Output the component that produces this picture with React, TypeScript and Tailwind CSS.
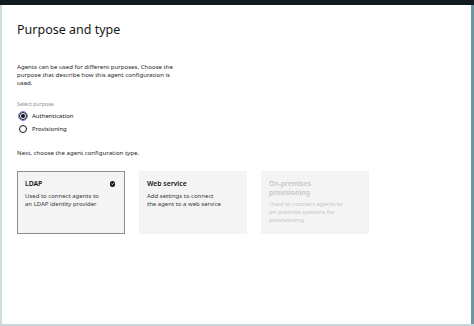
import React from 'react';

const cards = [
  {
    id: 'ldap',
    title: 'LDAP',
    text: 'Used to connect agents to an LDAP identity provider',
    selected: true,
    disabled: false
  },
  {
    id: 'web',
    title: 'Web service',
    text: 'Add settings to connect the agent to a web service',
    selected: false,
    disabled: false
  },
  {
    id: 'onprem',
    title: 'On-premises provisioning',
    text: 'Used to connect agents to on premise systems for provisioning',
    selected: false,
    disabled: true
  }
];

function Radio({ label, checked }: { label: string; checked?: boolean }) {
  return (
    <label className="flex items-center gap-[4px] text-[6px] text-[#161616]">
      {checked ? (
        <span className="flex h-[10px] w-[10px] items-center justify-center rounded-full border-[1.5px] border-[#6a7ff0]">
          <span className="flex h-[8px] w-[8px] items-center justify-center rounded-full border border-[#161616] bg-white">
            <span className="h-[4px] w-[4px] rounded-full bg-[#161616]" />
          </span>
        </span>
      ) : (
        <span className="flex h-[10px] w-[10px] items-center justify-center">
          <span className="h-[8px] w-[8px] rounded-full border border-[#161616] bg-white" />
        </span>
      )}
      <span>{label}</span>
    </label>
  );
}

export default function App() {
  return (
    <div
      className="flex h-[326px] w-[474px] flex-col overflow-hidden bg-white"
      style={{ fontFamily: '"Noto Sans", "Open Sans", sans-serif' }}
    >
      <div className="h-[5px] shrink-0 bg-[#121b1f]" />
      <div className="flex min-h-0 flex-1">
        <div className="w-[2px] shrink-0 bg-[#cddde3]" />
        <main className="flex-1 bg-white pl-[15px] pt-[17px]">
          <h1 className="text-[12.5px] leading-[16px] text-[#161616]">Purpose and type</h1>
          <p className="mt-[25px] w-[165px] text-[6.1px] leading-[8px] text-[#262626]">
            Agents can be used for different purposes. Choose the purpose that describe how this
            agent configuration is used.
          </p>
          <p className="mt-[14px] text-[5.3px] leading-[7px] text-[#8d8d8d]">Select purpose</p>
          <div className="mt-[3px] flex flex-col gap-[3px] pl-[1px]">
            <Radio label="Authentication" checked />
            <Radio label="Provisioning" />
          </div>
          <p className="mt-[15px] text-[6.1px] leading-[8px] text-[#262626]">
            Next, choose the agent configuration type.
          </p>
          <div className="mt-[14px] flex gap-[14px]">
            {cards.map((card) => (
              <div
                key={card.id}
                className={
                  card.selected
                    ? 'relative h-[63px] w-[108px] border border-[#8d8d8d] bg-[#f4f4f4] px-[7px] pt-[8px]'
                    : 'relative h-[63px] w-[108px] border border-transparent bg-[#f4f4f4] px-[7px] pt-[8px]'
                }
              >
                {card.selected ? (
                  <span className="absolute right-[9px] top-[9px] flex h-[5.5px] w-[5.5px] items-center justify-center rounded-full bg-[#161616]">
                    <svg viewBox="0 0 6 6" className="h-[5.5px] w-[5.5px]">
                      <path d="M1.6 3.1 L2.6 4 L4.4 2" fill="none" stroke="#fff" strokeWidth="0.8" />
                    </svg>
                  </span>
                ) : null}
                <p
                  className={
                    card.disabled
                      ? 'w-[70px] text-[6.8px] font-semibold leading-[8.5px] text-[#c6c6c6]'
                      : 'text-[6.8px] font-semibold leading-[8.5px] text-[#161616]'
                  }
                >
                  {card.title}
                </p>
                <p
                  className={
                    card.disabled
                      ? 'mt-[3px] w-[80px] text-[6px] leading-[8px] text-[#c6c6c6]'
                      : 'mt-[3px] w-[75px] text-[6px] leading-[8px] text-[#393939]'
                  }
                >
                  {card.text}
                </p>
              </div>
            ))}
          </div>
        </main>
        <div className="w-[3px] shrink-0 bg-[#6b98a2]" />
      </div>
      <div className="h-[2px] shrink-0 bg-[#c9d6dc]" />
    </div>
  );
}
